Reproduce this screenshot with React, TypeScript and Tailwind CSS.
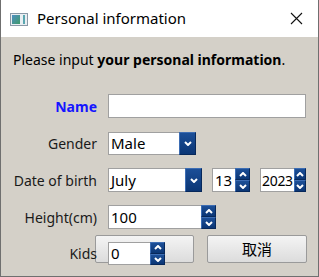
import React from "react";

const font = { fontFamily: '"Noto Sans", "Noto Sans CJK JP", sans-serif' };

function Chevron({ up }: { up?: boolean }) {
  return (
    <svg width="8" height="5" viewBox="0 0 8 5" className="block">
      <polyline
        points={up ? "1,4 4,1 7,4" : "1,1 4,4 7,1"}
        fill="none"
        stroke="white"
        strokeWidth="2"
      />
    </svg>
  );
}

function NavyBtn({ up, className }: { up?: boolean; className: string }) {
  return (
    <div
      className={`flex items-center justify-center border border-t-[#3d6db3] border-l-[#3d6db3] border-r-[#07285a] border-b-[#07285a] bg-gradient-to-b from-[#1c4f98] to-[#0b3675] ${className}`}
    >
      <Chevron up={up} />
    </div>
  );
}

function Select({ value, w, h }: { value: string; w: string; h: string }) {
  return (
    <div className={`flex ${w} ${h}`}>
      <div className="flex flex-1 items-center border border-r-0 border-[#a0a0a0] bg-white pl-[2px] text-[15px] text-black">
        {value}
      </div>
      <NavyBtn className="w-[17px] h-full" />
    </div>
  );
}

function Spin({
  value,
  w,
  h,
  btn = "w-[15px]",
  text = "text-[15px] pl-[2px]",
}: {
  value: string;
  w: string;
  h: string;
  btn?: string;
  text?: string;
}) {
  return (
    <div className={`flex ${w} ${h}`}>
      <div
        className={`flex min-w-0 flex-1 items-center overflow-hidden whitespace-nowrap border border-r-0 border-[#a0a0a0] bg-white text-black ${text}`}
      >
        {value}
      </div>
      <div className={`flex h-full shrink-0 flex-col ${btn}`}>
        <NavyBtn up className="flex-1" />
        <NavyBtn className="flex-1" />
      </div>
    </div>
  );
}

function Label({ children, className = "" }: { children: React.ReactNode; className?: string }) {
  return (
    <div className={`flex w-[84px] shrink-0 justify-end whitespace-nowrap text-[14px] ${className}`}>
      {children}
    </div>
  );
}

export default function App() {
  return (
    <div
      style={font}
      className="flex h-[277px] w-[319px] flex-col overflow-hidden border border-t-0 border-[#6f6f6f] bg-[#d4d0c8] text-[#1a1a1a]"
    >
      <div className="flex h-[37px] shrink-0 items-center bg-white pl-[9px] pr-[15px]">
        <svg width="18" height="13" viewBox="0 0 18 13" className="mt-[1px]">
          <rect x="0.5" y="0.5" width="17" height="12" fill="#e9eef2" stroke="#8a98a6" />
          <defs>
            <linearGradient id="ic" x1="0" y1="0" x2="1" y2="1">
              <stop offset="0" stopColor="#4f8fc2" />
              <stop offset="1" stopColor="#3f9a6a" />
            </linearGradient>
          </defs>
          <rect x="2" y="2" width="8" height="9" fill="url(#ic)" />
          <rect x="13" y="2" width="2" height="9" fill="#5aa7b0" />
        </svg>
        <span className="ml-[9px] text-[15px] text-black">Personal information</span>
        <svg width="13" height="13" viewBox="0 0 13 13" className="ml-auto">
          <path d="M1 1 L12 12 M12 1 L1 12" stroke="#111" strokeWidth="1.1" />
        </svg>
      </div>

      <div className="relative flex flex-col pl-[12px]">
        <p className="mt-[13px] whitespace-nowrap text-[14px] leading-[20px] text-black">
          Please input <b>your personal information</b>.
        </p>

        <div className="mt-[24px] flex items-center gap-[11px]">
          <Label className="font-bold text-[#1515ff]">Name</Label>
          <div className="h-[24px] w-[198px] border border-[#a0a0a0] bg-white" />
        </div>

        <div className="mt-[14px] flex items-center gap-[11px]">
          <Label>Gender</Label>
          <Select value="Male" w="w-[88px]" h="h-[23px]" />
        </div>

        <div className="mt-[13px] flex items-center gap-[11px]">
          <Label>Date of birth</Label>
          <Select value="July" w="w-[94px]" h="h-[24px]" />
          <div className="ml-[-1px] flex gap-[10px]">
            <Spin value="13" w="w-[38px]" h="h-[24px]" />
            <Spin
              value="2023"
              w="w-[46px]"
              h="h-[24px]"
              btn="w-[12px]"
              text="text-[14px] pl-[1px] tracking-[-0.3px]"
            />
          </div>
        </div>

        <div className="mt-[13px] flex items-center gap-[11px]">
          <Label>Height(cm)</Label>
          <Spin value="100" w="w-[108px]" h="h-[24px]" />
        </div>

        <div className="mt-[6px] flex gap-[13px] pl-[82px]">
          <button className="h-[28px] w-[99px] rounded-[2px] border border-[#9a9a9a] bg-gradient-to-b from-[#f4f4f4] to-[#dcdcdc] text-[15px]">
            OK
          </button>
          <button className="h-[28px] w-[100px] rounded-[2px] border border-[#9a9a9a] bg-gradient-to-b from-[#f4f4f4] to-[#dcdcdc] text-[15px] text-black">
            取消
          </button>
        </div>

        <div className="absolute bottom-[-2px] left-[12px] flex items-center gap-[11px]">
          <Label>Kids</Label>
          <Spin value="0" w="w-[57px]" h="h-[23px]" />
        </div>
      </div>
    </div>
  );
}
